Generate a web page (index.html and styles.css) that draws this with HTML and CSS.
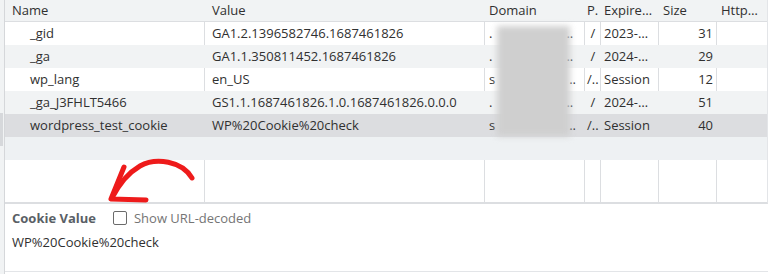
FILE: index.html
```html
<!DOCTYPE html>
<html>
<head>
<meta charset="utf-8">
<link rel="stylesheet" href="styles.css">
</head>
<body>
<div class="app">
  <div class="side"><div class="thumb"></div></div>
  <div class="main">
    <div class="table">
      <div class="cols">
        <div class="col c-name"></div>
        <div class="col c-value"></div>
        <div class="col c-domain"></div>
        <div class="col c-path"></div>
        <div class="col c-exp"></div>
        <div class="col c-size"></div>
        <div class="col c-http"></div>
      </div>
      <div class="rows">
        <div class="row head">
          <div class="cell c-name">Name</div>
          <div class="cell c-value">Value</div>
          <div class="cell c-domain">Domain</div>
          <div class="cell c-path">P.</div>
          <div class="cell c-exp">Expire…</div>
          <div class="cell c-size left">Size</div>
          <div class="cell c-http">Http…</div>
        </div>
        <div class="row">
          <div class="cell c-name ind">_gid</div>
          <div class="cell c-value">GA1.2.1396582746.1687461826</div>
          <div class="cell c-domain">.<span class="gap"></span>..</div>
          <div class="cell c-path">&nbsp;/</div>
          <div class="cell c-exp">2023-…</div>
          <div class="cell c-size">31</div>
          <div class="cell c-http"></div>
        </div>
        <div class="row alt">
          <div class="cell c-name ind">_ga</div>
          <div class="cell c-value">GA1.1.350811452.1687461826</div>
          <div class="cell c-domain">.<span class="gap"></span>..</div>
          <div class="cell c-path">&nbsp;/</div>
          <div class="cell c-exp">2024-…</div>
          <div class="cell c-size">29</div>
          <div class="cell c-http"></div>
        </div>
        <div class="row">
          <div class="cell c-name ind">wp_lang</div>
          <div class="cell c-value">en_US</div>
          <div class="cell c-domain">s<span class="gap"></span>..</div>
          <div class="cell c-path">/..</div>
          <div class="cell c-exp">Session</div>
          <div class="cell c-size">12</div>
          <div class="cell c-http"></div>
        </div>
        <div class="row alt">
          <div class="cell c-name ind">_ga_J3FHLT5466</div>
          <div class="cell c-value">GS1.1.1687461826.1.0.1687461826.0.0.0</div>
          <div class="cell c-domain">.<span class="gap"></span>..</div>
          <div class="cell c-path">&nbsp;/</div>
          <div class="cell c-exp">2024-…</div>
          <div class="cell c-size">51</div>
          <div class="cell c-http"></div>
        </div>
        <div class="row sel">
          <div class="cell c-name ind">wordpress_test_cookie</div>
          <div class="cell c-value">WP%20Cookie%20check</div>
          <div class="cell c-domain">s<span class="gap"></span>..</div>
          <div class="cell c-path">/..</div>
          <div class="cell c-exp">Session</div>
          <div class="cell c-size">40</div>
          <div class="cell c-http"></div>
        </div>
        <div class="row empty"></div>
      </div>
      <div class="blur"></div>
      <svg class="arrow" width="120" height="60" viewBox="100 155 120 60">
        <path d="M192,178 C182,161 156,157 140,166 C128,173 118,186 112,198" fill="none" stroke="#ee1b1b" stroke-width="5" stroke-linecap="round" stroke-linejoin="round"/>
        <path d="M124,167 L111,199 L146,200" fill="none" stroke="#ee1b1b" stroke-width="5" stroke-linecap="round" stroke-linejoin="round"/>
      </svg>
    </div>
    <div class="detail">
      <div class="dhead">
        <span class="dtitle">Cookie Value</span>
        <label class="chk"><span class="box"></span>Show URL-decoded</label>
      </div>
      <div class="dval">WP%20Cookie%20check</div>
    </div>
  </div>
</div>
</body>
</html>
```

FILE: styles.css
```css
* { box-sizing: border-box; }
html, body { margin: 0; padding: 0; }
body {
  width: 768px;
  height: 274px;
  overflow: hidden;
  background: #fff;
  font-family: "Open Sans", "Noto Sans", sans-serif;
  font-size: 13px;
  color: #303030;
}
.app { display: flex; height: 274px; }
.side {
  width: 5px;
  background: #f1f3f4;
  border-right: 1px solid #d5d7da;
  position: relative;
}
.thumb {
  position: absolute;
  left: 0; top: 113px;
  width: 3px; height: 33px;
  background: #d6d8db;
}
.main { flex: 1; display: flex; flex-direction: column; }
.table {
  position: relative;
  height: 204px;
  border-bottom: 2px solid #dcdee1;
  border-right: 1px solid #e3e5e8;
}
.cols {
  position: absolute;
  inset: 0;
  display: flex;
}
.col { border-right: 1px solid #dcdee1; height: 100%; }
.col.c-http { border-right: none; }
.rows { position: relative; }
.row {
  display: flex;
  height: 23px;
  align-items: center;
}
.row.head { height: 22px; background: #f1f3f4; border-bottom: 1px solid #dcdee1; }
.row.alt { background: #f1f3f4; }
.row.sel { background: #dcdde0; }
.row.empty { background: #eef1f3; }
.cell {
  padding: 0 6px;
  white-space: nowrap;
  overflow: hidden;
  line-height: 23px;
}
.c-name { width: 200px; flex: none; }
.c-value { width: 280px; flex: none; }
.c-domain { width: 100px; flex: none; }
.c-path { width: 16px; flex: none; }
.c-exp { width: 58px; flex: none; }
.c-size { width: 58px; flex: none; }
.c-http { flex: 1; }
.cols .c-http { flex: 1; }
.cell.c-name { padding-left: 7px; }
.cell.ind { padding-left: 25px; }
.cell.c-value { padding-left: 7px; }
.cell.c-domain { padding-left: 4px; }
.cell.c-path { padding: 0 0 0 2px; overflow: visible; }
.cell.c-exp { padding-left: 3px; }
.cell.c-size { text-align: right; padding-right: 4px; }
.cell.c-size.left { text-align: left; padding-left: 4px; }
.cell.c-http { padding-left: 4px; }
.gap { display: inline-block; width: 74px; }
.blur {
  position: absolute;
  left: 492px;
  top: 26px;
  width: 73px;
  height: 110px;
  background: #cfcfcf;
  filter: blur(3px);
}
.arrow {
  position: absolute;
  left: 95px;
  top: 155px;
  overflow: visible;
}
.detail {
  height: 68px;
  border-bottom: 1px solid #e3e5e8;
  padding: 0 7px;
}
.dhead {
  display: flex;
  align-items: center;
  height: 26px;
  padding-top: 1px;
}
.dtitle {
  font-weight: 700;
  color: #5a5f66;
  margin-right: 17px;
}
.chk {
  display: flex;
  align-items: center;
  color: #757575;
  font-size: 13px;
}
.box {
  width: 14px;
  height: 14px;
  border: 1px solid #6b6b6b;
  border-radius: 2px;
  margin-right: 7px;
}
.dval {
  line-height: 24px;
  color: #303030;
}
```
